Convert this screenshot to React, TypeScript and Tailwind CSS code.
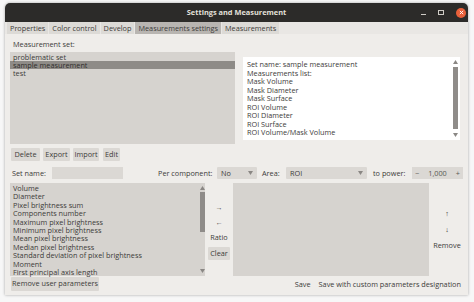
import type { FC, ReactNode } from 'react'

const font = { fontFamily: '"Open Sans", "Noto Sans", sans-serif' }

const tabs = ['Properties', 'Color control', 'Develop', 'Measurements settings', 'Measurements']

const sets = ['problematic set', 'sample measurement', 'test']

const summary = [
  'Set name: sample measurement',
  'Measurements list:',
  'Mask Volume',
  'Mask Diameter',
  'Mask Surface',
  'ROI Volume',
  'ROI Diameter',
  'ROI Surface',
  'ROI Volume/Mask Volume',
]

const parameters = [
  'Volume',
  'Diameter',
  'Pixel brightness sum',
  'Components number',
  'Maximum pixel brightness',
  'Minimum pixel brightness',
  'Mean pixel brightness',
  'Median pixel brightness',
  'Standard deviation of pixel brightness',
  'Moment',
  'First principal axis length',
]

const Arrow: FC<{ up?: boolean; className?: string }> = ({ up, className }) => (
  <svg width="5" height="4" viewBox="0 0 5 4" className={className}>
    <path d={up ? 'M0 4 L2.5 0 L5 4 Z' : 'M0 0 L2.5 4 L5 0 Z'} fill="#8a8784" />
  </svg>
)

const Scrollbar: FC<{ thumbTop: number; thumbHeight: number }> = ({ thumbTop, thumbHeight }) => (
  <div className="flex w-[6px] flex-col items-center justify-between py-[3px]">
    <Arrow up />
    <div className="relative w-[5px] flex-1">
      <div
        className="absolute left-0 w-[5px] bg-[#8f8c89]"
        style={{ top: thumbTop, height: thumbHeight }}
      />
    </div>
    <Arrow />
  </div>
)

const Btn: FC<{ children: ReactNode; className?: string }> = ({ children, className = '' }) => (
  <div
    className={`flex h-[13px] items-center justify-center whitespace-nowrap rounded-[1px] bg-[#dbd8d4] px-[2px] leading-none ${className}`}
  >
    {children}
  </div>
)

const Dropdown: FC<{ value: string; className?: string }> = ({ value, className = '' }) => (
  <div
    className={`flex h-[12px] items-center justify-between rounded-[1px] bg-[#dbd8d4] pl-[4px] pr-[4px] ${className}`}
  >
    <span>{value}</span>
    <Arrow />
  </div>
)

export default function App() {
  return (
    <div
      className="relative h-[302px] w-[474px] overflow-hidden bg-[#f7f7f7] text-[7.3px] text-[#3c3b39]"
      style={font}
    >
      <div className="ml-[5px] mt-[3px] flex h-[292px] w-[463px] flex-col overflow-hidden rounded-t-[5px] bg-[#efedea] shadow-[0_0_3px_rgba(0,0,0,0.35)]">
        {/* title bar */}
        <div className="grid h-[19px] shrink-0 grid-cols-[1fr_auto_1fr] items-center bg-[#2c2b29]">
          <div />
          <div className="text-[7.4px] font-bold text-[#e4e1db]">Settings and Measurement</div>
          <div className="flex items-center justify-end gap-[12px] pr-[2px]">
            <div className="mt-[3px] h-[1px] w-[5px] bg-[#cfccc6]" />
            <div className="h-[5px] w-[6px] border border-[#cfccc6]" />
            <div className="flex h-[10px] w-[10px] items-center justify-center rounded-full bg-[#e9603a]">
              <svg width="5" height="5" viewBox="0 0 5 5">
                <path d="M0.8 0.8 L4.2 4.2 M4.2 0.8 L0.8 4.2" stroke="#fff" strokeWidth="0.9" />
              </svg>
            </div>
          </div>
        </div>

        {/* tabs */}
        <div className="flex h-[12px] shrink-0 items-stretch bg-[#e9e7e4] pl-[2px]">
          {tabs.map((tab) => (
            <div
              key={tab}
              className={`mr-[1px] flex items-center px-[3px] ${
                tab === 'Measurements settings' ? 'bg-[#b8b5b1]' : 'bg-[#dcdad6]'
              }`}
            >
              {tab}
            </div>
          ))}
        </div>

        {/* page */}
        <div className="flex flex-1 flex-col">
          <div className="flex">
            <div className="ml-[5px] w-[225px]">
              <div className="mt-[6px] h-[8px] pl-[3px] leading-[8px]">Measurement set:</div>
              <div className="mt-[4px] h-[92px] bg-[#d6d3cf] pt-[1px]">
                {sets.map((s) => (
                  <div
                    key={s}
                    className={`h-[8.2px] pl-[3px] leading-[8.2px] ${
                      s === 'sample measurement' ? 'bg-[#8e8b87] text-[#2e2d2b]' : ''
                    }`}
                  >
                    {s}
                  </div>
                ))}
              </div>
            </div>
            <div className="ml-[8px] mt-[23px] flex h-[83px] w-[217px] bg-white pr-[2px]">
              <div className="flex-1 pl-[4px] pt-[3px]">
                {summary.map((line) => (
                  <div key={line} className="h-[8.5px] leading-[8.5px]">
                    {line}
                  </div>
                ))}
              </div>
              <Scrollbar thumbTop={3} thumbHeight={62} />
            </div>
          </div>

          {/* set buttons */}
          <div className="ml-[6px] mt-[4px] flex gap-[3px]">
            <Btn className="w-[29px]">Delete</Btn>
            <Btn className="w-[27px]">Export</Btn>
            <Btn className="w-[26px]">Import</Btn>
            <Btn className="ml-[1px] w-[17px]">Edit</Btn>
          </div>

          {/* form row */}
          <div className="mt-[6px] flex h-[12px] items-center">
            <div className="ml-[7px] w-[40px]">Set name:</div>
            <div className="h-[12px] w-[71px] bg-[#dbd8d4]" />
            <div className="ml-[35px] w-[59px]">Per component:</div>
            <Dropdown value="No" className="w-[40px]" />
            <div className="ml-[5px] w-[24px]">Area:</div>
            <Dropdown value="ROI" className="w-[81px]" />
            <div className="ml-[6px] w-[39px]">to power:</div>
            <div className="flex h-[12px] w-[51px] items-center justify-between bg-[#dbd8d4] px-[3px] text-[#5a5855]">
              <span>−</span>
              <span>1,000</span>
              <span>+</span>
            </div>
          </div>

          {/* parameter lists */}
          <div className="mt-[4px] flex h-[93px]">
            <div className="ml-[5px] flex w-[195px] bg-[#d6d3cf]">
              <div className="flex-1 pl-[3px] pt-[1px]">
                {parameters.map((p) => (
                  <div key={p} className="h-[8.4px] leading-[8.4px]">
                    {p}
                  </div>
                ))}
              </div>
              <Scrollbar thumbTop={2} thumbHeight={40} />
            </div>
            <div className="flex w-[28px] flex-col items-center pt-[17px]">
              <div className="flex h-[15px] items-center">→</div>
              <div className="flex h-[15px] items-center">←</div>
              <div className="flex h-[15px] items-center">Ratio</div>
              <Btn className="mt-[2px] h-[12px] w-[22px]">Clear</Btn>
            </div>
            <div className="w-[196px] bg-[#d6d3cf]" />
            <div className="flex w-[36px] flex-col items-center pt-[22px]">
              <div className="flex h-[16px] items-center">↑</div>
              <div className="flex h-[16px] items-center">↓</div>
              <div className="flex h-[16px] items-center">Remove</div>
            </div>
          </div>

          {/* bottom row */}
          <div className="mt-[1px] flex h-[14px] items-center">
            <Btn className="ml-[6px] h-[14px] w-[88px]">Remove user parameters</Btn>
            <div className="ml-auto mr-[7px] flex gap-[8px]">
              <span>Save</span>
              <span>Save with custom parameters designation</span>
            </div>
          </div>
        </div>
      </div>
    </div>
  )
}
